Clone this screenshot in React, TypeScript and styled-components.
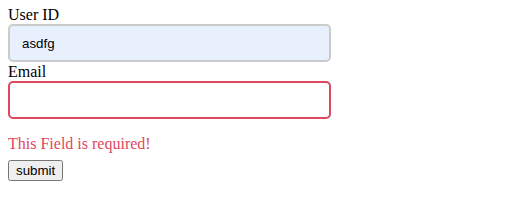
import React, { useState } from 'react';
import styled, { createGlobalStyle, css } from 'styled-components';

const GlobalStyle = createGlobalStyle`
  body {
    margin: 5px 8px 8px;
    font-family: 'Liberation Serif', 'Times New Roman', serif;
    font-size: 16px;
    color: #000;
    background: #fff;
  }
`;

const Form = styled.form`
  display: flex;
  flex-direction: column;
  align-items: flex-start;
`;

const Label = styled.label`
  display: block;
  line-height: 19px;
`;

interface InputProps {
  $invalid?: boolean;
  $filled?: boolean;
}

const Input = styled.input<InputProps>`
  box-sizing: border-box;
  width: 323px;
  height: 38px;
  margin: 0;
  padding: 0 12px;
  border: 2px solid #cbcbcb;
  border-radius: 5px;
  background: #fff;
  font-family: 'Liberation Sans', Arial, sans-serif;
  font-size: 13.333px;
  color: #000;
  outline: none;
  ${(props) =>
    props.$filled &&
    css`
      background: #e8f0fe;
    `}
  ${(props) =>
    props.$invalid &&
    css`
      border-color: #e0475d;
    `}
`;

const ErrorText = styled.p`
  margin: 16px 0 7px;
  line-height: 18px;
  color: #e0475d;
`;

const Submit = styled.button`
  font-family: 'Liberation Sans', Arial, sans-serif;
  font-size: 13.333px;
  padding: 1px 6px;
  margin: 0;
  color: #000;
`;

export default function App() {
  const [userId, setUserId] = useState('asdfg');
  const [email, setEmail] = useState('');

  return (
    <>
      <GlobalStyle />
      <Form onSubmit={(e) => e.preventDefault()}>
        <Label htmlFor="userId">User ID</Label>
        <Input
          id="userId"
          value={userId}
          $filled={userId !== ''}
          onChange={(e) => setUserId(e.target.value)}
        />
        <Label htmlFor="email">Email</Label>
        <Input
          id="email"
          value={email}
          $invalid={email === ''}
          onChange={(e) => setEmail(e.target.value)}
        />
        {email === '' && <ErrorText>This Field is required!</ErrorText>}
        <Submit type="submit">submit</Submit>
      </Form>
    </>
  );
}
